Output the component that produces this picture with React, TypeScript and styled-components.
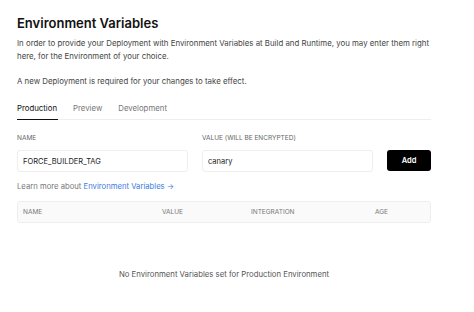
import React from 'react';
import styled, { createGlobalStyle } from 'styled-components';

const GlobalStyle = createGlobalStyle`
  html, body {
    margin: 0;
    padding: 0;
    background: #fff;
  }
  body {
    font-family: 'Inter', 'Liberation Sans', sans-serif;
    -webkit-font-smoothing: antialiased;
  }
`;

const tabs = ['Production', 'Preview', 'Development'];
const columns = [
  { label: 'Name', width: '139px' },
  { label: 'Value', width: '89px' },
  { label: 'Integration', width: '124px' },
  { label: 'Age', width: 'auto' },
];

function App() {
  return (
    <Page>
      <GlobalStyle />
      <Title>Environment Variables</Title>
      <Text>
        In order to provide your Deployment with Environment Variables at Build
        and Runtime, you may enter them right here, for the Environment of your
        choice.
      </Text>
      <Text>A new Deployment is required for your changes to take effect.</Text>

      <Tabs>
        {tabs.map((t, i) => (
          <Tab key={t} active={i === 0}>
            {t}
          </Tab>
        ))}
      </Tabs>

      <Form>
        <Field>
          <Label>Name</Label>
          <Input defaultValue='FORCE_BUILDER_TAG' />
        </Field>
        <Field>
          <Label>Value (will be encrypted)</Label>
          <Input defaultValue='canary' />
        </Field>
        <AddButton type='button'>Add</AddButton>
      </Form>

      <LearnMore>
        Learn more about <a href='#'>Environment Variables →</a>
      </LearnMore>

      <Table>
        <TableHead>
          {columns.map((c) => (
            <HeadCell key={c.label} width={c.width}>
              {c.label}
            </HeadCell>
          ))}
        </TableHead>
        <Empty>No Environment Variables set for Production Environment</Empty>
      </Table>
    </Page>
  );
}

export default App;

const Page = styled.div`
  width: 414px;
  padding: 15px 43px 0 17px;
  color: #111;
`;

const Title = styled.h1`
  margin: 0 0 6px;
  font-size: 13px;
  line-height: 16px;
  font-weight: 600;
  color: #111;
`;

const Text = styled.p`
  margin: 0 0 12px;
  font-size: 7.85px;
  line-height: 13px;
  color: #444;
`;

const Tabs = styled.div`
  display: flex;
  gap: 15px;
  margin-top: 15px;
  border-bottom: 1px solid #eee;
`;

const Tab = styled.div<{ active?: boolean }>`
  padding: 0 1px 5px 0;
  font-size: 7.8px;
  line-height: 11px;
  color: ${(p) => (p.active ? '#111' : '#777')};
  border-bottom: 1px solid ${(p) => (p.active ? '#111' : 'transparent')};
  margin-bottom: -1px;
`;

const Form = styled.div`
  display: flex;
  align-items: flex-end;
  gap: 14px;
  margin-top: 14px;
`;

const Field = styled.div`
  display: flex;
  flex-direction: column;
  gap: 7px;
  width: 171px;
`;

const Label = styled.div`
  font-size: 6.5px;
  line-height: 9px;
  text-transform: uppercase;
  color: #666;
`;

const Input = styled.input`
  box-sizing: border-box;
  height: 22px;
  padding: 0 5px;
  font-family: inherit;
  font-size: 7.5px;
  color: #222;
  border: 1px solid #eee;
  border-radius: 3px;
  outline: none;
`;

const AddButton = styled.button`
  width: 44px;
  height: 21px;
  margin-bottom: 1px;
  background: #000;
  color: #fff;
  border: none;
  border-radius: 3px;
  font-family: inherit;
  font-size: 7.5px;
  font-weight: 600;
`;

const LearnMore = styled.div`
  margin-top: 10px;
  font-size: 7.7px;
  line-height: 10px;
  color: #777;

  a {
    color: #3b7de0;
    text-decoration: none;
  }
`;

const Table = styled.div`
  margin-top: 9px;
`;

const TableHead = styled.div`
  display: flex;
  align-items: center;
  box-sizing: border-box;
  height: 22px;
  padding: 0 5px;
  background: #fafafa;
  border: 1px solid #eee;
  border-radius: 3px;
`;

const HeadCell = styled.div<{ width: string }>`
  flex: ${(p) => (p.width === 'auto' ? '1' : `0 0 ${p.width}`)};
  font-size: 6.5px;
  text-transform: uppercase;
  color: #777;
`;

const Empty = styled.div`
  padding: 46px 0 18px;
  text-align: center;
  font-size: 7.75px;
  line-height: 10px;
  color: #555;
`;
